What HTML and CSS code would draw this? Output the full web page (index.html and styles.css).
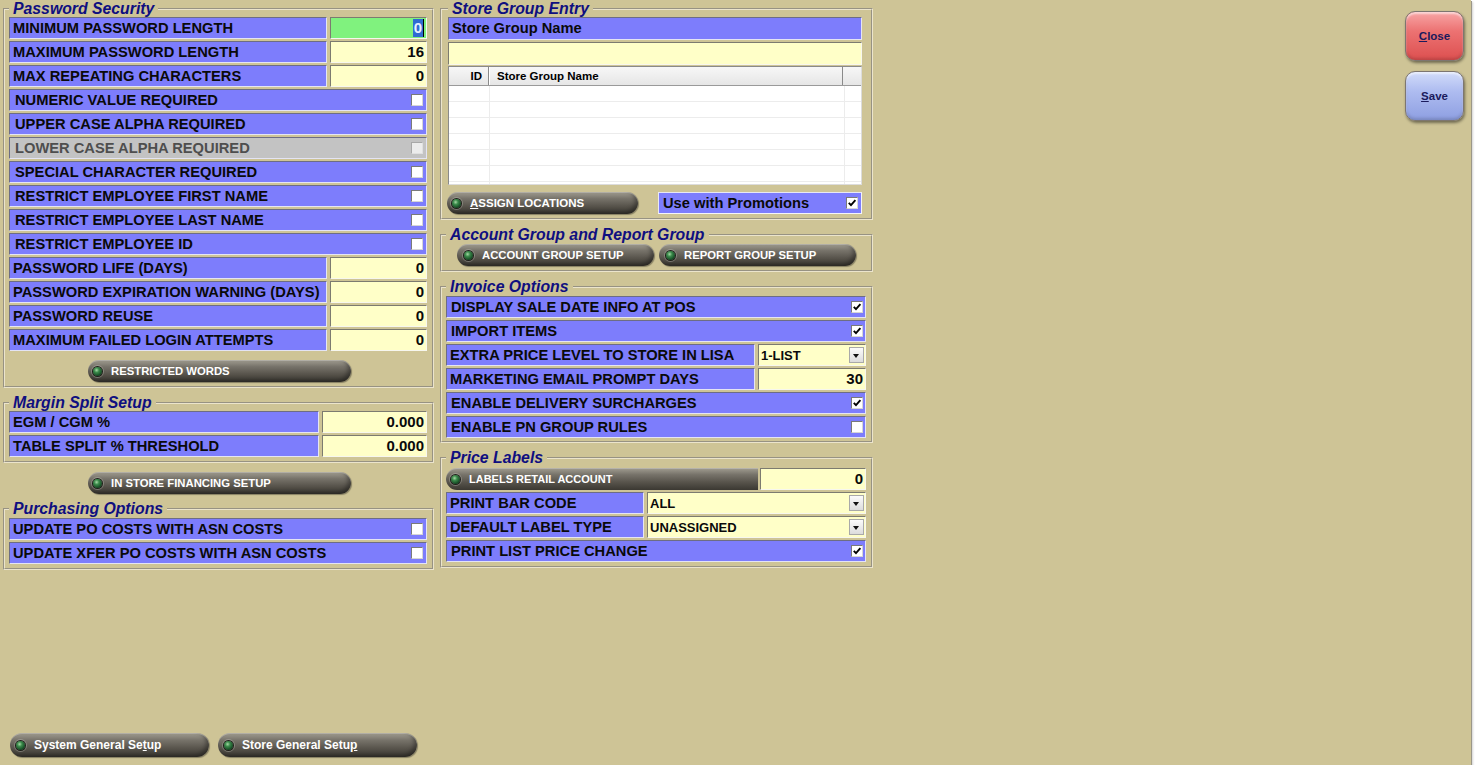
FILE: index.html
```html
<!DOCTYPE html>
<html>
<head>
<meta charset="utf-8">
<link rel="stylesheet" href="styles.css">
</head>
<body>
<div class="screen">
  <div class="col-left">
    <fieldset class="grp pw">
      <legend>Password Security</legend>
      <div class="rows">
        <div class="row"><span class="lbl">MINIMUM PASSWORD LENGTH</span><span class="val focus"><span class="selnum">0</span></span></div>
        <div class="row"><span class="lbl">MAXIMUM PASSWORD LENGTH</span><span class="val">16</span></div>
        <div class="row"><span class="lbl">MAX REPEATING CHARACTERS</span><span class="val">0</span></div>
        <div class="row check"><span class="txt">NUMERIC VALUE REQUIRED</span><span class="cb"></span></div>
        <div class="row check"><span class="txt">UPPER CASE ALPHA REQUIRED</span><span class="cb"></span></div>
        <div class="row check disabled"><span class="txt">LOWER CASE ALPHA REQUIRED</span><span class="cb"></span></div>
        <div class="row check"><span class="txt">SPECIAL CHARACTER REQUIRED</span><span class="cb"></span></div>
        <div class="row check"><span class="txt">RESTRICT EMPLOYEE FIRST NAME</span><span class="cb"></span></div>
        <div class="row check"><span class="txt">RESTRICT EMPLOYEE LAST NAME</span><span class="cb"></span></div>
        <div class="row check"><span class="txt">RESTRICT EMPLOYEE ID</span><span class="cb"></span></div>
        <div class="row"><span class="lbl">PASSWORD LIFE (DAYS)</span><span class="val">0</span></div>
        <div class="row"><span class="lbl">PASSWORD EXPIRATION WARNING (DAYS)</span><span class="val">0</span></div>
        <div class="row"><span class="lbl">PASSWORD REUSE</span><span class="val">0</span></div>
        <div class="row"><span class="lbl">MAXIMUM FAILED LOGIN ATTEMPTS</span><span class="val">0</span></div>
      </div>
      <button class="pill pw-btn"><span class="led"></span>RESTRICTED WORDS</button>
    </fieldset>

    <fieldset class="grp margin">
      <legend>Margin Split Setup</legend>
      <div class="rows">
        <div class="row"><span class="lbl">EGM / CGM %</span><span class="val">0.000</span></div>
        <div class="row"><span class="lbl">TABLE SPLIT % THRESHOLD</span><span class="val">0.000</span></div>
      </div>
    </fieldset>

    <button class="pill isf-btn"><span class="led"></span>IN STORE FINANCING SETUP</button>

    <fieldset class="grp purch">
      <legend>Purchasing Options</legend>
      <div class="rows">
        <div class="row check"><span class="txt">UPDATE PO COSTS WITH ASN COSTS</span><span class="cb"></span></div>
        <div class="row check"><span class="txt">UPDATE XFER PO COSTS WITH ASN COSTS</span><span class="cb"></span></div>
      </div>
    </fieldset>

    <div class="bottom-btns">
      <button class="pill big"><span class="led"></span>System General Se<u>t</u>up</button>
      <button class="pill big"><span class="led"></span>Store General Setu<u>p</u></button>
    </div>
  </div>

  <div class="col-mid">
    <fieldset class="grp sg">
      <legend>Store Group Entry</legend>
      <div class="sg-head">Store Group Name</div>
      <div class="sg-input"></div>
      <div class="grid">
        <div class="grid-head">
          <span class="gh-id">ID</span>
          <span class="gh-name">Store Group Name</span>
          <span class="gh-x"></span>
        </div>
        <div class="grid-body">
          <span class="gb-id"></span>
          <span class="gb-name"></span>
          <span class="gb-x"></span>
        </div>
      </div>
      <div class="sg-actions">
        <button class="pill assign"><span class="led"></span><u>A</u>SSIGN LOCATIONS</button>
        <div class="promo"><span class="txt">Use with Promotions</span><span class="cb on"><svg viewBox="0 0 10 10"><path d="M1.8 4.8 L4 7.2 L8.4 2.2" /></svg></span></div>
      </div>
    </fieldset>

    <fieldset class="grp acct">
      <legend>Account Group and Report Group</legend>
      <div class="acct-btns">
        <button class="pill acct-btn"><span class="led"></span>ACCOUNT GROUP SETUP</button>
        <button class="pill acct-btn"><span class="led"></span>REPORT GROUP SETUP</button>
      </div>
    </fieldset>

    <fieldset class="grp inv">
      <legend>Invoice Options</legend>
      <div class="rows">
        <div class="row check"><span class="txt">DISPLAY SALE DATE INFO AT POS</span><span class="cb on"><svg viewBox="0 0 10 10"><path d="M1.8 4.8 L4 7.2 L8.4 2.2" /></svg></span></div>
        <div class="row check"><span class="txt">IMPORT ITEMS</span><span class="cb on"><svg viewBox="0 0 10 10"><path d="M1.8 4.8 L4 7.2 L8.4 2.2" /></svg></span></div>
        <div class="row inv-split"><span class="lbl">EXTRA PRICE LEVEL TO STORE IN LISA</span><span class="sel"><span class="sel-txt">1-LIST</span><span class="dd"></span></span></div>
        <div class="row inv-split"><span class="lbl">MARKETING EMAIL PROMPT DAYS</span><span class="val">30</span></div>
        <div class="row check"><span class="txt">ENABLE DELIVERY SURCHARGES</span><span class="cb on"><svg viewBox="0 0 10 10"><path d="M1.8 4.8 L4 7.2 L8.4 2.2" /></svg></span></div>
        <div class="row check"><span class="txt">ENABLE PN GROUP RULES</span><span class="cb"></span></div>
      </div>
    </fieldset>

    <fieldset class="grp price">
      <legend>Price Labels</legend>
      <div class="rows">
        <div class="row retail"><span class="pill bar"><span class="led"></span>LABELS RETAIL ACCOUNT</span><span class="val">0</span></div>
        <div class="row price-split"><span class="lbl">PRINT BAR CODE</span><span class="sel"><span class="sel-txt">ALL</span><span class="dd"></span></span></div>
        <div class="row price-split"><span class="lbl">DEFAULT LABEL TYPE</span><span class="sel"><span class="sel-txt">UNASSIGNED</span><span class="dd"></span></span></div>
        <div class="row check"><span class="txt">PRINT LIST PRICE CHANGE</span><span class="cb on"><svg viewBox="0 0 10 10"><path d="M1.8 4.8 L4 7.2 L8.4 2.2" /></svg></span></div>
      </div>
    </fieldset>
  </div>

  <div class="col-right">
    <button class="sq close"><u>C</u>lose</button>
    <button class="sq save"><u>S</u>ave</button>
  </div>
</div>
</body>
</html>
```

FILE: styles.css
```css
* { box-sizing: border-box; }

body {
  margin: 0;
  background: #ffffff;
  font-family: "Liberation Sans", Arial, sans-serif;
}

.screen {
  width: 1471px;
  height: 765px;
  background: #cec496;
  display: flex;
  box-shadow: 1px 1px 0 #9b9788, 2px 2px 2px rgba(0, 0, 0, 0.18);
}

/* ---------- columns ---------- */
.col-left {
  width: 437px;
  display: flex;
  flex-direction: column;
}

.col-mid {
  width: 433px;
  margin-left: 3px;
  display: flex;
  flex-direction: column;
}

.col-right {
  margin-left: auto;
  margin-right: 7px;
  padding-top: 11px;
  display: flex;
  flex-direction: column;
  gap: 10px;
}

/* ---------- group boxes ---------- */
fieldset.grp {
  margin: 0;
  min-width: 0;
  border: 2px groove #ebe4cc;
  padding: 0 5px 4px 4px;
}

.col-left .grp {
  margin-left: 3px;
  width: 431px;
}

.col-mid .grp {
  width: 433px;
}

legend {
  padding: 0 4px;
  font: italic bold 15.8px/17px "Liberation Sans", Arial, sans-serif;
  color: #0f0f80;
}

.margin { margin-top: 6px !important; }
.purch { margin-top: 6px !important; padding-top: 1px !important; }

.sg { padding: 0 9px 4px 6px !important; }
.acct { margin-top: 6px !important; padding-top: 1px !important; }
.inv { margin-top: 6px !important; padding-top: 1px !important; padding-bottom: 3px !important; }
.price { margin-top: 6px !important; padding-top: 2px !important; }

/* ---------- rows ---------- */
.rows {
  display: flex;
  flex-direction: column;
  gap: 2px;
}

.row {
  height: 22px;
  display: flex;
  gap: 3px;
  font-weight: bold;
  font-size: 14.7px;
  color: #0a0a0a;
}

.lbl {
  flex: 1;
  background: #7d7dfc;
  border: 1px solid;
  border-color: #6d6d84 #e4e4f4 #e4e4f4 #6d6d84;
  padding-left: 3px;
  line-height: 20px;
  white-space: nowrap;
  overflow: hidden;
}

.val {
  width: 97px;
  background: #ffffc8;
  border: 1px solid;
  border-color: #7c7b70 #f7f7ee #f7f7ee #7c7b70;
  text-align: right;
  padding-right: 2px;
  line-height: 20px;
  font-size: 15px;
}

.val.focus {
  background: #80f27e;
}

.selnum {
  display: inline-block;
  background: #2f6bd2;
  color: #e8f0ff;
  padding: 0 1px;
  line-height: 18px;
  border-right: 1px solid #000;
}

.margin .val { width: 105px; }

.check {
  background: #7d7dfc;
  border: 1px solid;
  border-color: #6d6d84 #e4e4f4 #e4e4f4 #6d6d84;
  padding-left: 5px;
  padding-right: 3px;
  align-items: center;
  justify-content: space-between;
}

.purch .check { padding-left: 3px; }
.inv .check, .price .check { padding-left: 4px; padding-right: 2px; }

.check.disabled {
  background: #c3c3c3;
  color: #4e4e4e;
}

.txt { white-space: nowrap; }

.cb {
  width: 12px;
  height: 12px;
  background: #ffffff;
  border: 1px solid;
  border-color: #7a7a7a #d6d6d6 #d6d6d6 #7a7a7a;
  display: flex;
}

.disabled .cb {
  background: #ececec;
  border-color: #a8a8a8 #e0e0e0 #e0e0e0 #a8a8a8;
}

.cb svg {
  width: 10px;
  height: 10px;
}

.cb svg path {
  fill: none;
  stroke: #000;
  stroke-width: 1.9;
}

/* ---------- select ---------- */
.sel {
  width: 108px;
  background: #ffffc8;
  border: 1px solid;
  border-color: #7c7b70 #f7f7ee #f7f7ee #7c7b70;
  display: flex;
  align-items: center;
  justify-content: space-between;
  padding: 0 1px 0 2px;
  font-size: 13px;
}

.dd {
  width: 15px;
  height: 16px;
  background: linear-gradient(#fbfbfb, #dcdcdc);
  border: 1px solid #a9a9a9;
  position: relative;
}

.dd::after {
  content: "";
  position: absolute;
  left: 3px;
  top: 6px;
  border-left: 3.5px solid transparent;
  border-right: 3.5px solid transparent;
  border-top: 4px solid #111;
}

.inv-split .val { width: 108px; }
.price-split .sel { width: 219px; }

/* ---------- dark pill buttons ---------- */
.pill {
  display: flex;
  align-items: center;
  height: 22px;
  border: none;
  border-radius: 11px;
  padding: 0 0 0 5px;
  background: linear-gradient(#a19d91 0%, #77736a 30%, #57534b 65%, #3b3832 100%);
  box-shadow: 1px 1px 1px rgba(0, 0, 0, 0.35), inset 0 1px 0 rgba(255, 255, 255, 0.25), inset -3px -2px 4px rgba(0, 0, 0, 0.35);
  color: #ffffff;
  font: bold 11.3px "Liberation Sans", Arial, sans-serif;
  white-space: nowrap;
}

.led {
  width: 9px;
  height: 9px;
  border-radius: 50%;
  margin-right: 9px;
  flex: none;
  background: radial-gradient(circle at 40% 35%, #a6d8a6 0, #3a8a4a 30%, #154a24 70%, #0a2a12 100%);
  box-shadow: 0 0 0 1px #1f1f1a, 0 0 0 2px rgba(210, 210, 200, 0.35);
}

.pw-btn {
  width: 263px;
  margin: 9px 0 0 79px;
}

.isf-btn {
  width: 263px;
  margin: 9px 0 0 88px;
}

.bottom-btns {
  margin-top: auto;
  margin-bottom: 8px;
  padding-left: 10px;
  display: flex;
  gap: 9px;
}

.pill.big {
  width: 199px;
  height: 24px;
  border-radius: 12px;
  font-size: 12px;
  padding-left: 6px;
}

/* ---------- store group ---------- */
.sg-head {
  height: 23px;
  background: #7d7dfc;
  border: 1px solid;
  border-color: #6d6d84 #e4e4f4 #e4e4f4 #6d6d84;
  font-weight: bold;
  font-size: 14.7px;
  line-height: 21px;
  padding-left: 3px;
  color: #0a0a0a;
}

.sg-input {
  margin-top: 2px;
  height: 23px;
  background: #ffffc8;
  border: 1px solid;
  border-color: #7c7b70 #f7f7ee #f7f7ee #7c7b70;
}

.grid {
  margin-top: 1px;
  height: 119px;
  background: #ffffff;
  border: 1px solid;
  border-color: #8a8a8a #dcdcdc #dcdcdc #8a8a8a;
  display: flex;
  flex-direction: column;
}

.grid-head {
  height: 19px;
  display: flex;
  background: linear-gradient(#f7f7f7, #e6e6e6);
  border-bottom: 1px solid #9a9a9a;
  font: bold 11.5px/18px "Liberation Sans", Arial, sans-serif;
  color: #000;
}

.gh-id {
  width: 40px;
  text-align: right;
  padding-right: 6px;
  border-right: 1px solid #8a8a8a;
  box-shadow: 1px 0 0 #ffffff;
}

.gh-name {
  flex: 1;
  padding-left: 7px;
  border-right: 1px solid #8a8a8a;
  margin-left: 1px;
}

.gh-x {
  width: 18px;
}

.grid-body {
  flex: 1;
  display: flex;
  background: repeating-linear-gradient(to bottom, transparent 0, transparent 15px, #ececec 15px, #ececec 16px);
}

.gb-id {
  width: 41px;
  border-right: 1px solid #ececec;
}

.gb-name {
  flex: 1;
  border-right: 1px solid #ececec;
}

.gb-x {
  width: 16px;
}

.sg-actions {
  margin-top: 7px;
  height: 22px;
  display: flex;
  justify-content: space-between;
}

.pill.assign {
  width: 191px;
  margin-left: -1px;
  font-size: 11.5px;
}

.promo {
  width: 204px;
  background: #7d7dfc;
  border: 1px solid;
  border-color: #e8e8f4 #f4f4fa #f4f4fa #e8e8f4;
  display: flex;
  align-items: center;
  justify-content: space-between;
  padding: 0 3px 0 4px;
  font-weight: bold;
  font-size: 14.7px;
  color: #0a0a0a;
}

/* ---------- account group ---------- */
.acct-btns {
  display: flex;
  gap: 5px;
  margin-left: 11px;
}

.pill.acct-btn {
  width: 197px;
  padding-left: 7px;
}

/* ---------- price labels ---------- */
.retail { gap: 2px; }

.pill.bar {
  width: 312px;
  border-radius: 11px 0 0 11px;
  font-size: 11px;
  font-weight: bold;
  box-shadow: inset 0 1px 0 rgba(255, 255, 255, 0.25);
}

.retail .val { width: 106px; }

/* ---------- right buttons ---------- */
.sq {
  width: 59px;
  height: 50px;
  border-radius: 10px;
  border: 1px solid #7d7670;
  font: bold 11.5px "Liberation Sans", Arial, sans-serif;
  color: #1a1a5c;
  box-shadow: 1px 2px 3px rgba(0, 0, 0, 0.45), inset 0 2px 2px rgba(255, 255, 255, 0.55), inset 0 -2px 3px rgba(0, 0, 0, 0.15);
}

.close {
  background: linear-gradient(#f8a6a6 0%, #ec7272 40%, #dd5050 100%);
}

.save {
  background: linear-gradient(#d2dcfa 0%, #aebcf0 40%, #8e9fe2 100%);
}
```
